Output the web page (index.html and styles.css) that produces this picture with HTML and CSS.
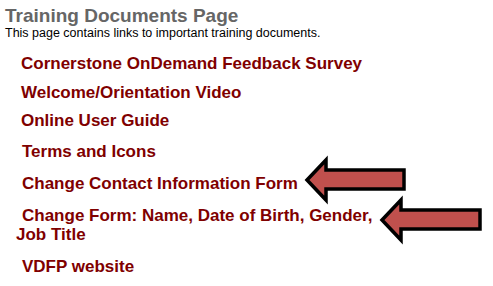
FILE: index.html
```html
<!DOCTYPE html>
<html>
<head>
<meta charset="utf-8">
<link rel="stylesheet" href="styles.css">
</head>
<body>
<div class="page">
  <h1 class="title">Training Documents Page</h1>
  <p class="intro">This page contains links to important training documents.</p>
  <ul class="links">
    <li class="item"><a href="#">Cornerstone OnDemand Feedback Survey</a></li>
    <li class="item"><a href="#">Welcome/Orientation Video</a></li>
    <li class="item"><a href="#">Online User Guide</a></li>
    <li class="item"><a href="#">Terms and Icons</a></li>
    <li class="item"><a href="#">Change Contact Information Form</a></li>
    <li class="item"><a href="#">Change Form: Name, Date of Birth, Gender, Job Title</a></li>
    <li class="item"><a href="#">VDFP website</a></li>
  </ul>
  <svg class="arrows" width="493" height="286" viewBox="0 0 493 286">
    <polygon points="307,180 326,160 326,170 404,170 404,189 326,189 326,200" />
    <polygon points="382,220 401,200 401,210 480,210 480,229 401,229 401,240" />
  </svg>
</div>
</body>
</html>
```
FILE: styles.css
```css
html, body {
  margin: 0;
  padding: 0;
  background: #ffffff;
}
.page {
  position: relative;
  width: 493px;
  height: 286px;
  overflow: hidden;
  font-family: "Liberation Sans", Arial, sans-serif;
}
.title {
  margin: 0;
  padding: 6px 0 0 5px;
  font-size: 19px;
  line-height: 20px;
  font-weight: bold;
  color: #666666;
}
.intro {
  margin: 1px 0 0 5px;
  font-size: 12.5px;
  line-height: 13px;
  color: #000000;
}
.links {
  list-style: none;
  margin: 14px 0 0 0;
  padding: 0 0 0 16px;
  width: 370px;
  font-size: 17px;
  line-height: 19px;
  font-weight: bold;
}
.item {
  text-indent: 6px;
  margin-top: 13px;
}
.item:nth-child(1) { margin-top: 0; text-indent: 5px; }
.item:nth-child(2) { margin-top: 10px; text-indent: 5px; }
.item:nth-child(3) { margin-top: 9px; text-indent: 5px; }
.item:nth-child(4) { margin-top: 12px; }
.item a {
  color: #7f0000;
  text-decoration: none;
}
.arrows {
  position: absolute;
  left: 0;
  top: 0;
  pointer-events: none;
}
.arrows polygon {
  fill: #c0504d;
  stroke: #000000;
  stroke-width: 3.5;
  stroke-linejoin: miter;
}
```
